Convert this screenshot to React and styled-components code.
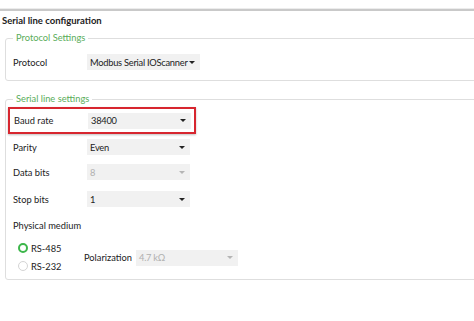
import React from 'react';
import styled, { createGlobalStyle } from 'styled-components';

const GlobalStyle = createGlobalStyle`
  html, body {
    margin: 0;
    padding: 0;
    background: #ffffff;
    overflow: hidden;
  }
  body {
    font-family: Lato, "Open Sans", sans-serif;
    font-size: 9.3px;
    color: #222;
  }
`;

const Page = styled.div`
  width: 474px;
  height: 321px;
  display: flex;
  flex-direction: column;
  overflow: hidden;
`;

const TopRule = styled.div`
  margin-top: 8px;
  height: 1px;
  background: #ececec;
  border-bottom: 2px solid #c9c9c9;
`;

const Title = styled.div`
  font-weight: bold;
  font-size: 9.5px;
  padding: 2px 0 0 2px;
  height: 17px;
  line-height: 16px;
`;

const Group = styled.fieldset`
  margin: ${p => p.top}px -30px 0 5px;
  padding: ${p => p.padTop}px 7px ${p => p.padBottom}px 7px;
  border: 1px solid #dedede;
  border-radius: 3px;
  min-width: 0;
`;

const Legend = styled.legend`
  color: #5aad5a;
  padding: 0 3px;
  margin-left: 0;
  font-size: 9.3px;
  line-height: 12px;
`;

const Row = styled.div`
  display: grid;
  grid-template-columns: 74px auto;
  align-items: center;
  height: ${p => p.height || 26}px;
`;

const Highlight = styled.div`
  margin: 0 0 0 -5px;
  width: 180px;
  padding: 3px 0 3px 4px;
  border: 2px solid #d7262f;
  box-shadow: 0 1px 2px rgba(0, 0, 0, 0.25);
`;

const Label = styled.span`
  color: #222;
  white-space: nowrap;
`;

const Select = styled.div`
  box-sizing: border-box;
  width: ${p => p.width}px;
  height: 16px;
  background: #f1f1f1;
  display: flex;
  align-items: center;
  justify-content: space-between;
  padding: 0 5px 0 3px;
  color: ${p => (p.disabled ? '#b0b0b0' : '#222')};
  letter-spacing: -0.25px;
  white-space: nowrap;
`;

const Arrow = styled.span`
  flex: none;
  width: 0;
  height: 0;
  border-left: 3px solid transparent;
  border-right: 3px solid transparent;
  border-top: 3.5px solid ${p => (p.disabled ? '#b5b5b5' : '#222')};
`;

const Medium = styled.div`
  margin-top: 6px;
  height: 12px;
  line-height: 12px;
`;

const MediumBody = styled.div`
  display: flex;
  align-items: center;
  margin-top: 10px;
  padding-left: 5px;
`;

const Radios = styled.div`
  display: flex;
  flex-direction: column;
  gap: 6px;
  width: 66px;
`;

const RadioRow = styled.label`
  display: flex;
  align-items: center;
  gap: 3px;
  height: 12px;
`;

const RadioDot = styled.span`
  box-sizing: border-box;
  width: 10px;
  height: 10px;
  border-radius: 50%;
  border: ${p => (p.checked ? '2.5px solid #3cb64a' : '1px solid #d4d4d4')};
  background: #fff;
`;

const Polar = styled.div`
  display: flex;
  align-items: center;
  margin-top: 1px;
`;

const PolarLabel = styled.span`
  width: 52px;
`;

function Combo({ value, width, disabled }) {
  return (
    <Select disabled={disabled} width={width}>
      <span>{value}</span>
      <Arrow disabled={disabled} />
    </Select>
  );
}

export default function App() {
  return (
    <Page>
      <GlobalStyle />
      <TopRule />
      <Title>Serial line configuration</Title>

      <Group top={2} padTop={5} padBottom={5}>
        <Legend>Protocol Settings</Legend>
        <Row height={26}>
          <Label>Protocol</Label>
          <Combo value="Modbus Serial IOScanner" width={113} />
        </Row>
      </Group>

      <Group top={12} padTop={2} padBottom={7}>
        <Legend>Serial line settings</Legend>
        <Highlight>
          <Row height={17}>
            <Label>Baud rate</Label>
            <Combo value="38400" width={103} />
          </Row>
        </Highlight>
        <Row height={26}>
          <Label>Parity</Label>
          <Combo value="Even" width={103} />
        </Row>
        <Row height={24}>
          <Label>Data bits</Label>
          <Combo value="8" width={103} disabled />
        </Row>
        <Row height={30}>
          <Label>Stop bits</Label>
          <Combo value="1" width={103} />
        </Row>
        <Medium>Physical medium</Medium>
        <MediumBody>
          <Radios>
            <RadioRow>
              <RadioDot checked />
              RS-485
            </RadioRow>
            <RadioRow>
              <RadioDot />
              RS-232
            </RadioRow>
          </Radios>
          <Polar>
            <PolarLabel>Polarization</PolarLabel>
            <Combo value="4.7 kΩ" width={102} disabled />
          </Polar>
        </MediumBody>
      </Group>
    </Page>
  );
}
